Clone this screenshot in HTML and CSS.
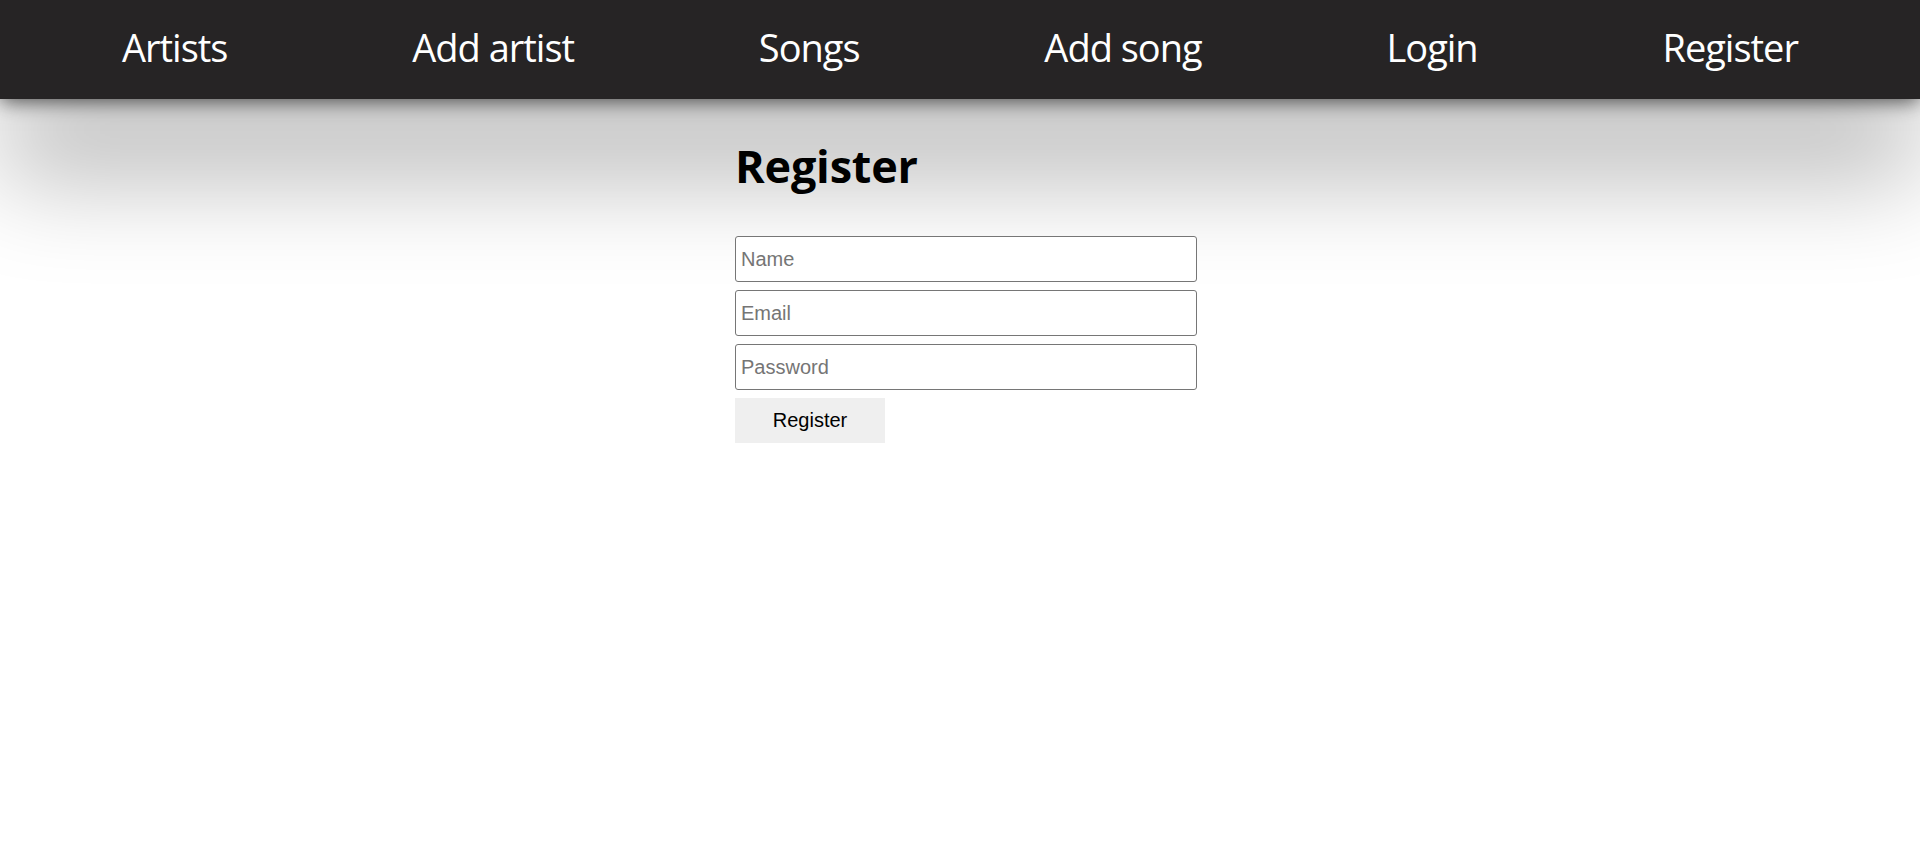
FILE: index.html
```html
<!DOCTYPE html>
<html lang="en">
<head>
<meta charset="utf-8">
<title>Register</title>
<link rel="stylesheet" href="styles.css">
</head>
<body>
<nav class="topnav">
  <ul class="nav-list">
    <li><a class="nav-link" href="#">Artists</a></li>
    <li><a class="nav-link" href="#">Add artist</a></li>
    <li><a class="nav-link" href="#">Songs</a></li>
    <li><a class="nav-link" href="#">Add song</a></li>
    <li><a class="nav-link" href="#">Login</a></li>
    <li><a class="nav-link" href="#">Register</a></li>
  </ul>
</nav>
<main class="content">
  <h1 class="title">Register</h1>
  <form class="form">
    <input class="field" type="text" placeholder="Name">
    <input class="field" type="email" placeholder="Email">
    <input class="field" type="password" placeholder="Password">
    <button class="submit" type="button">Register</button>
  </form>
</main>
</body>
</html>
```
FILE: styles.css
```css
html, body {
  margin: 0;
  padding: 0;
  background: #ffffff;
}

body {
  font-family: "Open Sans", "Noto Sans", sans-serif;
}

.topnav {
  box-sizing: border-box;
  height: 99px;
  background: #262425;
  box-shadow: 0 2px 20px rgba(0, 0, 0, 0.7), 0 80px 100px rgba(0, 0, 0, 0.27);
}

.nav-list {
  box-sizing: border-box;
  height: 99px;
  margin: 0;
  padding: 27px 122px 32px;
  list-style: none;
  display: flex;
  justify-content: space-between;
  line-height: 40px;
}

.nav-link {
  color: #ffffff;
  text-decoration: none;
  font-family: "Open Sans", sans-serif;
  font-size: 38px;
  letter-spacing: -1px;
}

.content {
  width: 450px;
  margin: 0 auto;
}

.title {
  margin: 36px 0 40px;
  font-family: "Open Sans", sans-serif;
  font-weight: 700;
  font-size: 45px;
  line-height: 61px;
  letter-spacing: -0.2px;
  color: #000000;
}

.form {
  display: flex;
  flex-direction: column;
  align-items: flex-start;
  gap: 8px;
}

.field {
  box-sizing: content-box;
  width: 100%;
  height: 24px;
  margin: 0;
  padding: 10px 5px;
  border: 1px solid #767676;
  border-radius: 3px;
  background: #ffffff;
  font-family: "Liberation Sans", Arial, sans-serif;
  font-size: 20px;
  color: #000000;
}

.field::placeholder {
  color: #757575;
}

.submit {
  width: 150px;
  height: 45px;
  margin: 0;
  padding: 0;
  border: none;
  background: #efefef;
  font-family: "Liberation Sans", Arial, sans-serif;
  font-size: 20px;
  color: #000000;
}
```
